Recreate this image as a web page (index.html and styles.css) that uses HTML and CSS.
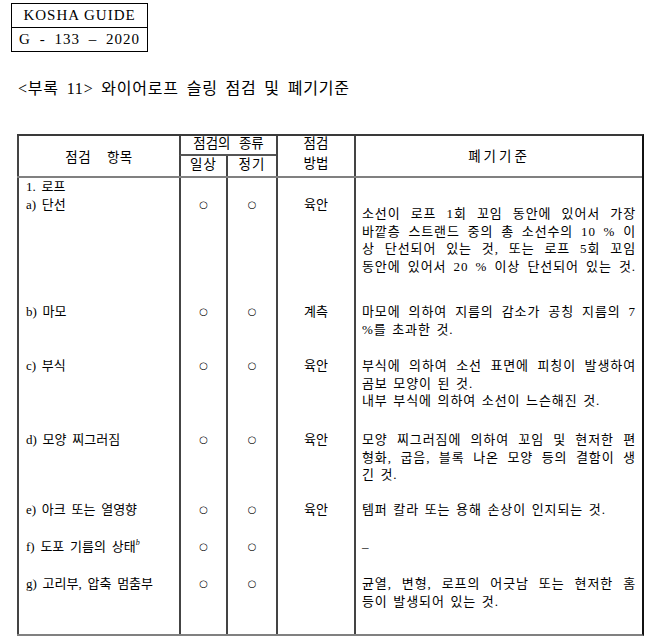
FILE: index.html
```html
<!DOCTYPE html>
<html lang="ko">
<head>
<meta charset="utf-8">
<title>KOSHA GUIDE G-133-2020 부록 11</title>
<link rel="stylesheet" href="styles.css">
</head>
<body>
<div class="guide">
  <div class="guide-row">KOSHA GUIDE</div>
  <div class="guide-row guide-code">G - 133 – 2020</div>
</div>

<h1 class="title">&lt;부록 11&gt; 와이어로프 슬링 점검 및 폐기기준</h1>

<div class="sheet">
  <div class="head">
    <div class="hc h-item">점검 항목</div>
    <div class="hc h-kind">점검의 종류</div>
    <div class="hc h-method">점검<br>방법</div>
    <div class="hc h-crit">폐기기준</div>
    <div class="hc h-daily">일상</div>
    <div class="hc h-periodic">정기</div>
  </div>

  <div class="row r-a">
    <div class="cell c-item">1. 로프<br>a) 단선</div>
    <div class="cell c-mark c-low"><span class="mark">○</span></div>
    <div class="cell c-mark c-low"><span class="mark">○</span></div>
    <div class="cell c-mark c-low">육안</div>
    <div class="cell c-desc c-drop">
      <span class="ln full">소선이 로프 1회 꼬임 동안에 있어서 가장</span>
      <span class="ln full">바깥층 스트랜드 중의 총 소선수의 10 % 이</span>
      <span class="ln full">상 단선되어 있는 것, 또는 로프 5회 꼬임</span>
      <span class="ln full">동안에 있어서 20 % 이상 단선되어 있는 것.</span>
    </div>
  </div>

  <div class="row r-b">
    <div class="cell c-item">b) 마모</div>
    <div class="cell c-mark"><span class="mark">○</span></div>
    <div class="cell c-mark"><span class="mark">○</span></div>
    <div class="cell c-mark">계측</div>
    <div class="cell c-desc">
      <span class="ln full">마모에 의하여 지름의 감소가 공칭 지름의 7</span>
      <span class="ln">%를 초과한 것.</span>
    </div>
  </div>

  <div class="row r-c">
    <div class="cell c-item">c) 부식</div>
    <div class="cell c-mark"><span class="mark">○</span></div>
    <div class="cell c-mark"><span class="mark">○</span></div>
    <div class="cell c-mark">육안</div>
    <div class="cell c-desc">
      <span class="ln full">부식에 의하여 소선 표면에 피칭이 발생하여</span>
      <span class="ln">곰보 모양이 된 것.</span>
      <span class="ln">내부 부식에 의하여 소선이 느슨해진 것.</span>
    </div>
  </div>

  <div class="row r-d">
    <div class="cell c-item">d) 모양 찌그러짐</div>
    <div class="cell c-mark"><span class="mark">○</span></div>
    <div class="cell c-mark"><span class="mark">○</span></div>
    <div class="cell c-mark">육안</div>
    <div class="cell c-desc">
      <span class="ln full">모양 찌그러짐에 의하여 꼬임 및 현저한 편</span>
      <span class="ln full">형화, 굽음, 블록 나온 모양 등의 결함이 생</span>
      <span class="ln">긴 것.</span>
    </div>
  </div>

  <div class="row r-e">
    <div class="cell c-item">e) 아크 또는 열영향</div>
    <div class="cell c-mark"><span class="mark">○</span></div>
    <div class="cell c-mark"><span class="mark">○</span></div>
    <div class="cell c-mark">육안</div>
    <div class="cell c-desc">
      <span class="ln">템퍼 칼라 또는 용해 손상이 인지되는 것.</span>
    </div>
  </div>

  <div class="row r-f">
    <div class="cell c-item">f) 도포 기름의 상태<sup class="fn">b</sup></div>
    <div class="cell c-mark"><span class="mark">○</span></div>
    <div class="cell c-mark"><span class="mark">○</span></div>
    <div class="cell c-mark"></div>
    <div class="cell c-desc">
      <span class="ln">–</span>
    </div>
  </div>

  <div class="row r-g">
    <div class="cell c-item">g) 고리부, 압축 멈춤부</div>
    <div class="cell c-mark"><span class="mark">○</span></div>
    <div class="cell c-mark"><span class="mark">○</span></div>
    <div class="cell c-mark"></div>
    <div class="cell c-desc">
      <span class="ln full">균열, 변형, 로프의 어긋남 또는 현저한 홈</span>
      <span class="ln">등이 발생되어 있는 것.</span>
    </div>
  </div>
</div>
</body>
</html>
```

FILE: styles.css
```css
html, body {
  background: #fff;
}

body {
  margin: 0;
  padding: 3px 0 0 0;
  color: #000;
  font-family: "Liberation Serif", "Noto Sans CJK KR", serif;
}

/* document code box */
.guide {
  margin-left: 11px;
  width: 137px;
  box-sizing: border-box;
  border: 1px solid #000;
  font-size: 15px;
  letter-spacing: 1px;
}

.guide-row {
  height: 23px;
  line-height: 23px;
  text-align: center;
}

.guide-code {
  height: 23px;
  line-height: 22px;
  border-top: 1px solid #000;
  word-spacing: 4px;
}

/* title */
.title {
  margin: 27px 0 0 18px;
  font-size: 16px;
  line-height: 20px;
  font-weight: normal;
  letter-spacing: 0.8px;
  word-spacing: 3px;
}

/* table */
.sheet {
  margin: 35px 0 0 17px;
  width: 627px;
  box-sizing: border-box;
  border-top: 2px solid #3a3a3a;
  border-right: 2px solid #111;
  border-bottom: 2px solid #808080;
  font-size: 13px;
  line-height: 17.5px;
  word-spacing: 2.5px;
}

.head,
.row {
  display: grid;
  grid-template-columns: 162px 47px 50px 78px 288px;
}

.head {
  grid-template-rows: 20px 20px;
  border-bottom: 2px solid #808080;
  font-size: 13.5px;
}

.hc {
  border-left: 2px solid #444;
  display: flex;
  align-items: center;
  justify-content: center;
  text-align: center;
  line-height: 20px;
}

.h-item { grid-column: 1; grid-row: 1 / 3; padding-top: 4px; word-spacing: 12px; letter-spacing: 0.5px; }
.h-kind { grid-column: 2 / 4; grid-row: 1; border-bottom: 2px solid #555; padding-bottom: 2px; word-spacing: 5px; }
.h-method { grid-column: 4; grid-row: 1 / 3; padding-bottom: 4px; }
.h-crit { grid-column: 5; grid-row: 1 / 3; padding-top: 2px; letter-spacing: 3px; }
.h-daily { grid-column: 2; grid-row: 2; padding-bottom: 2px; letter-spacing: 1px; }
.h-periodic { grid-column: 3; grid-row: 2; padding-bottom: 2px; letter-spacing: 1px; }

.cell {
  border-left: 2px solid #444;
}

.c-item {
  padding-left: 7px;
}

.c-mark {
  text-align: center;
}

.c-low {
  padding-top: 17.5px;
}

.c-desc {
  padding: 0 6px 0 6px;
  letter-spacing: 0.9px;
  word-spacing: 1.5px;
}

.c-drop {
  padding-top: 27px;
}

.ln {
  display: block;
  text-align: left;
  white-space: nowrap;
}

.ln.full {
  text-align: justify;
  text-align-last: justify;
}

.mark {
  font-family: "DejaVu Sans", sans-serif;
  font-size: 10px;
  vertical-align: 1px;
}

.fn {
  font-size: 8px;
  font-style: italic;
  line-height: 0;
  vertical-align: 6px;
}

.r-a { height: 125px; }
.r-b { height: 54px; }
.r-c { height: 74px; }
.r-d { height: 70px; }
.r-e { height: 37px; }
.r-f { height: 37px; }
.r-g { height: 59px; }
```
